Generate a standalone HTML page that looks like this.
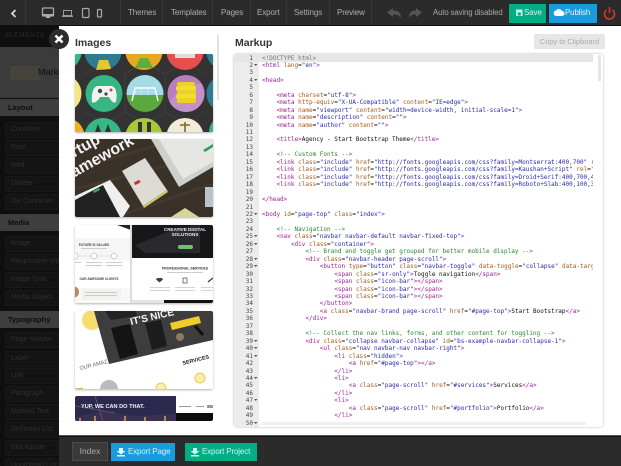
<!DOCTYPE html>
<html lang="en"><head><meta charset="utf-8"><title>Markup export</title>
<style>
*{box-sizing:border-box}
html,body{margin:0;padding:0;width:621px;height:466px;overflow:hidden;background:#111}
body{font-family:"Liberation Sans",sans-serif;position:relative}
.abs,.m,.it,.h{position:absolute}
#top{position:absolute;left:0;top:0;width:621px;height:26px;background:#2b2b2b;border-bottom:1px solid #111}
.sep{position:absolute;top:0;width:1px;height:25px;background:#383838}
.m{top:7px;font-size:8px;line-height:12px;color:#aeaeae;white-space:nowrap;letter-spacing:-.1px}
#side{position:absolute;left:0;top:26px;width:59px;height:440px;background:#0f0f0f;overflow:hidden}
.it{left:5px;width:60px;height:16px;background:#141414;border:1px solid #181818;color:#2e2e2e;font-size:7px;line-height:14px;padding-left:5px;white-space:nowrap}
.h{left:0;width:60px;height:17px;background:#3e3e3e;color:#0e0e0e;font-weight:bold;font-size:7.5px;line-height:17px;padding-left:8px}
#modal{position:absolute;left:59px;top:26px;width:562px;height:410px;background:#fff;border-bottom:1px solid #555}
#bot{position:absolute;left:59px;top:436px;width:562px;height:30px;background:#2b2b2b;border-top:1px solid #111}
.btn{position:absolute;color:#d6f0f4;font-size:8px;text-align:left;white-space:nowrap;letter-spacing:-.15px}
.ttl{position:absolute;font-size:10.5px;font-weight:bold;color:#333}
.img{position:absolute;left:75px;width:138px;overflow:hidden;border-radius:2px;box-shadow:0 1px 2px rgba(0,0,0,.3);display:block}
#ed{position:absolute;left:234px;top:54px;width:369px;height:373px;border-radius:3px;box-shadow:0 0 2px rgba(0,0,0,.3);background:#fff;overflow:hidden}
#gut{position:absolute;left:0;top:0;width:25px;height:373px;background:#ececec}
#act{position:absolute;left:0;top:0;width:359px;height:8px;background:#e6e6e6}
#nums,#code{position:absolute;top:.5px;font-family:"DejaVu Sans Mono","Liberation Mono",monospace;font-size:6px;line-height:7.45px;white-space:pre}
#nums{left:0;width:19px;text-align:right;color:#444}
#code{left:28px;width:331px;height:363px;overflow:hidden;color:#111}
.t{color:#a0209a}.a{color:#a8581a}.s{color:#2a2ab0}.c{color:#2d862d}.d{color:#777}
</style></head><body>
<div id="side">
<div class="abs" style="left:5px;top:6px;font-size:6.5px;color:#2c2c2c;letter-spacing:.6px">ELEMENTS</div>
<div class="abs" style="left:0;top:21px;width:60px;height:51px;background:#3b3b3b"></div>
<div class="abs" style="left:10px;top:40px;width:30px;height:14px;background:#46433c"></div>
<div class="abs" style="left:38px;top:41px;font-size:9px;color:#111">Markup</div>
<div class="h" style="top:73px">Layout</div>
<div class="it" style="top:96px">Container</div>
<div class="it" style="top:114px">Row</div>
<div class="it" style="top:132px">Well</div>
<div class="it" style="top:150px">Divider</div>
<div class="it" style="top:168px">Div Container</div>
<div class="h" style="top:188px">Media</div>
<div class="it" style="top:210px">Image</div>
<div class="it" style="top:228px">Responsive Video</div>
<div class="it" style="top:246px">Image Grid</div>
<div class="it" style="top:264px">Media Object</div>
<div class="h" style="top:285px">Typography</div>
<div class="it" style="top:306px">Page Header</div>
<div class="it" style="top:325px">Label</div>
<div class="it" style="top:342px">Link</div>
<div class="it" style="top:360px">Paragraph</div>
<div class="it" style="top:378px">Marked Text</div>
<div class="it" style="top:396px">Definition List</div>
<div class="it" style="top:414px">Blockquote</div>
<div class="it" style="top:432px">Unordered List</div>
</div>

<div id="top">
<div class="sep" style="left:25px"></div><div class="sep" style="left:120px"></div><div class="sep" style="left:162px"></div><div class="sep" style="left:212px"></div><div class="sep" style="left:250px"></div><div class="sep" style="left:286px"></div><div class="sep" style="left:329px"></div><div class="sep" style="left:371px"></div>
<svg class="abs" style="left:0;top:0" width="621" height="26" viewBox="0 0 621 26">
<path d="M15.5 10 L12 13.5 L15.5 17" fill="none" stroke="#ddd" stroke-width="1.7"/>
<rect x="42.5" y="8" width="11" height="8" rx="1" fill="none" stroke="#aaa" stroke-width="1.3"/><rect x="42" y="14" width="12" height="2" fill="#aaa"/><rect x="46" y="16" width="4" height="2" fill="#aaa"/>
<rect x="63.5" y="10.500" width="8" height="5" fill="none" stroke="#999" stroke-width="1"/><rect x="62" y="15.500" width="11" height="1.500" fill="#999"/>
<rect x="82.500" y="8.500" width="6.500" height="9" rx="1" fill="none" stroke="#aaa" stroke-width="1.200"/>
<rect x="97.500" y="9.500" width="4" height="7.500" rx="1" fill="none" stroke="#aaa" stroke-width="1.200"/>
<path d="M387 12.500 L393 8 V10.500 C398 10.500 401 13 401 18 C399.500 15 397 14.500 393 14.500 V17Z" fill="#555"/>
<path d="M422 12.500 L416 8 V10.500 C411 10.500 409 13 409 18 C410.500 15 412 14.500 416 14.500 V17Z" fill="#555"/>
<path d="M606.500 10 A5 5 0 1 0 612.500 10" fill="none" stroke="#e4382c" stroke-width="1.400"/><path d="M609.500 7 V13" stroke="#e4382c" stroke-width="1.400"/>
</svg>
<div class="m" style="left:128px">Themes</div><div class="m" style="left:171px">Templates</div><div class="m" style="left:221px">Pages</div><div class="m" style="left:257px">Export</div><div class="m" style="left:294px">Settings</div><div class="m" style="left:337px">Preview</div>
<div class="m" style="left:433px;font-size:7.8px;color:#a8a8a8;letter-spacing:-.12px">Auto saving disabled</div>
<div class="btn" style="left:509px;top:4px;width:37px;height:19px;background:#03ad85;line-height:18px;padding-left:15px">Save</div>
<div class="btn" style="left:549px;top:4px;width:48px;height:19px;background:#1a9bdb;line-height:18px;padding-left:16px;color:#e6f5fb">Publish</div>
<svg class="abs" style="left:0;top:0" width="621" height="26" viewBox="0 0 621 26">
<rect x="516" y="9.500" width="6.500" height="6.500" fill="#c8efe4"/><rect x="517.800" y="12.500" width="3" height="3" fill="#00ad85"/>
<path d="M556 16 h6 a2.500 2.500 0 0 0 0 -5 a3.500 3.500 0 0 0 -6 -.5 a2.800 2.800 0 0 0 0 5.500z" fill="#fff"/>
</svg>
</div>

<div id="modal"></div>
<div class="abs" style="left:217px;top:35px;width:2px;height:65px;background:#e2e2e2"></div>
<div class="ttl" style="left:75px;top:37px">Images</div>
<div class="ttl" style="left:235px;top:37px">Markup</div>
<div class="abs" style="left:534px;top:34px;width:71px;height:15px;background:#e6e6e6;border-radius:1px;color:#a9a9a9;font-size:7.4px;line-height:15px;text-align:center;white-space:nowrap">Copy to Clipboard</div>

<svg class="abs" style="left:49px;top:29px" width="20" height="20" viewBox="0 0 20 20"><circle cx="10" cy="10" r="10" fill="#2c2c2c"/><path d="M6.500 6.500 L13.500 13.500 M13.500 6.500 L6.500 13.500" stroke="#fff" stroke-width="2.600"/></svg>

<svg class="img" style="top:54px;height:78px" viewBox="0 0 138 78">
<rect width="138" height="78" fill="#333"/>
<g stroke="#3e3e3e" fill="none"><path d="M10 20 L30 8 M50 20 L70 8 L90 20 L110 8 L130 20 M50 20 V58 M90 20 V58 M10 58 L30 70 L50 58 L70 70 L90 58 L110 70 L130 58"/></g>
<circle cx="28" cy="-2.500" r="18.500" fill="#2f7c92"/><path d="M21 16 L24 6 L33 6 L36 15 Z" fill="#e2c72e"/>
<circle cx="69" cy="-2.500" r="18.500" fill="#e5a91f"/><path d="M60 14 L65 4 L73 4 L78 14 Z" fill="#62ac3f"/>
<circle cx="110" cy="-2.500" r="18.500" fill="#e94e4e"/><rect x="100" y="0" width="20" height="4" fill="#ddd"/>
<circle cx="-12" cy="-2.500" r="18.500" fill="#36b785"/><circle cx="150" cy="-2.500" r="18.500" fill="#2f7c92"/>
<circle cx="-12" cy="39.500" r="18.500" fill="#f5e77f"/><circle cx="150" cy="39.500" r="18.500" fill="#2f7c92"/>
<circle cx="29" cy="39.500" r="18.500" fill="#35b683"/>
<path d="M17 48 C16 38 19 32 23 32 L36 32 C40 32 43 38 41 48 C39 50 36 47 34 43 L25 43 C23 47 19 50 17 48Z" fill="#f2f2f2"/><circle cx="25" cy="37" r="2.200" fill="#444"/><circle cx="31" cy="40" r="1.600" fill="#444"/><circle cx="36" cy="36" r="1.500" fill="#c44"/>
<clipPath id="g1"><circle cx="70" cy="39.500" r="18.500"/></clipPath>
<g clip-path="url(#g1)"><rect x="50" y="20" width="40" height="21" fill="#a5dbe5"/><rect x="50" y="41" width="40" height="20" fill="#5aa93f"/><path d="M57 47 L60 34 L80 34 L83 47" fill="none" stroke="#fff" stroke-width="1.400"/><path d="M60 38 H80 M60 34 V41 M66 34 V41 M73 34 V41" stroke="#d8eef2" stroke-width=".6"/></g>
<clipPath id="g2"><circle cx="111" cy="39.500" r="18.500"/></clipPath>
<g clip-path="url(#g2)"><rect x="90" y="20" width="42" height="40" fill="#b77fc0"/><path d="M92 50 L102 40 L122 30 L130 28 V60 H92Z" fill="#c390ca"/><rect x="102" y="28" width="18" height="5" rx="2" fill="#eed21f"/><rect x="101" y="32" width="20" height="5" rx="2" fill="#f2dc38"/><rect x="102" y="36" width="19" height="5" rx="2" fill="#eed21f"/><rect x="101" y="40" width="20" height="5" rx="2" fill="#f2dc38"/><rect x="102" y="44" width="19" height="5" rx="2" fill="#eed21f"/></g>
<circle cx="28" cy="82.500" r="18.500" fill="#36b785"/><path d="M20 78 L23 70 L26 78Z M30 78 L33 70 L36 78Z" fill="#333"/>
<circle cx="69" cy="82.500" r="18.500" fill="#a9c832"/><rect x="63" y="68" width="4" height="10" fill="#333"/><rect x="72" y="68" width="4" height="10" fill="#333"/>
<circle cx="110" cy="82.500" r="18.500" fill="#f2ecd7"/><path d="M110 68 V78 M105 71 H115" stroke="#7a6a20" stroke-width="1.600"/>
<circle cx="-9" cy="82.500" r="18.500" fill="#efb21f"/><circle cx="150" cy="78" r="16" fill="#36b785"/>
</svg>

<svg class="img" style="top:139px;height:78px" viewBox="0 0 138 78">
<rect width="138" height="78" fill="#3a3129"/>
<path d="M0 30 L138 -10 M0 50 L138 15 M40 78 L138 45" stroke="#42382e" stroke-width="3"/>
<text x="-1" y="18" transform="rotate(-29 0 18)" font-family="Liberation Sans" font-size="16" font-weight="bold" fill="#f4f4f4">rtup</text>
<text x="-1" y="38" transform="rotate(-29 0 38)" font-family="Liberation Sans" font-size="16" font-weight="bold" fill="#f4f4f4">amework</text>
<path d="M76 0 L104 48 L138 28 V0Z" fill="#cfcfcb"/><path d="M84 0 L108 40 L138 23 V0Z" fill="#e6e6e4"/><path d="M128 11 L138 5 V8 L130 13Z" fill="#2aa05a"/>
<path d="M70 19 L47 32 L68 67 L92 51Z" fill="#dcdbd5"/><path d="M68 67 L92 51 L93 53 L69 69Z" fill="#cfc76a"/><rect x="59" y="42" width="6" height="3" fill="#c9362c" transform="rotate(-28 62 43)"/>
<path d="M0 57 L35 41 L55 67 L48 78 L0 78Z" fill="#efefef"/><path d="M0 61 L28 46 L45 78 L0 78Z" fill="#222"/><path d="M18 52 L24 49 L25 51 L19 54Z" fill="#3aa76a"/>
<path d="M96 78 L110 69 L124 78Z" fill="#d9d3a0"/><rect x="130" y="48" width="8" height="20" fill="#b9c4c8"/>
</svg>

<svg class="img" style="top:225px;height:78px" viewBox="0 0 138 78">
<rect width="138" height="78" fill="#fff"/>
<rect y="13" width="55" height="22" fill="#f6f6f6"/><rect y="63" width="55" height="15" fill="#f8f8f8"/>
<path d="M42 0 L56 5 V0Z" fill="#222"/>
<rect x="55" y="0" width="2" height="78" fill="#ddd"/>
<rect x="57" y="0" width="81" height="33" fill="#17171a"/>
<path d="M60 20 L100 4 L125 0 L125 28 H70Z" fill="#2a2a2c"/>
<text x="110" y="6" text-anchor="middle" font-family="Liberation Sans" font-size="4.600" font-weight="bold" fill="#eee">CREATIVE DIGITAL</text>
<text x="110" y="11" text-anchor="middle" font-family="Liberation Sans" font-size="4.600" font-weight="bold" fill="#eee">SOLUTIONS</text>
<rect x="103" y="20" width="15" height="4" rx="2" fill="#6fc36b"/>
<text x="110" y="44.500" text-anchor="middle" font-family="Liberation Sans" font-size="3.500" font-weight="bold" fill="#333">PROFESSIONAL SERVICES</text>
<rect x="92" y="47" width="36" height="1" fill="#ccc"/>
<path d="M82 53 h5 l1 1.500 l-3.500 3 l-3.500 -3z" fill="#444"/><rect x="108" y="53" width="4" height="5" fill="none" stroke="#444" stroke-width=".7"/><path d="M133 57 L138 53" stroke="#333" stroke-width="1.200"/>
<path d="M75 62 h20 v1 h-20z M75 65 h20 v1 h-20z M100 62 h20 v1 h-20z M100 65 h20 v1 h-20z M126 62 h12 v1 h-12z M126 65 h12 v1 h-12z" fill="#d4d4d4"/>
<rect x="57" y="75" width="32" height="3" fill="#e4e4e4"/><rect x="89" y="75" width="49" height="3" fill="#111"/>
<text x="19" y="21" text-anchor="middle" font-family="Liberation Sans" font-size="3.200" font-weight="bold" fill="#444">FUTURE IS VALUED</text>
<rect x="6" y="23" width="26" height="1" fill="#ccc"/>
<path d="M2 31 H42" stroke="#ccc" stroke-width=".5"/><circle cx="19" cy="31" r="3" fill="#fff" stroke="#999" stroke-width=".5"/><circle cx="39" cy="31" r="3" fill="#fff" stroke="#999" stroke-width=".5"/><circle cx="0" cy="31" r="3" fill="#fff" stroke="#999" stroke-width=".5"/>
<path d="M11 37 h16 v1 h-16z M31 37 h16 v1 h-16z M0 37 h6 v1 h-6z M11 40 h16 v1 h-16z M31 40 h16 v1 h-16z" fill="#ccc"/>
<text x="24" y="55" text-anchor="middle" font-family="Liberation Sans" font-size="3.200" font-weight="bold" fill="#444">OUR AWESOME CLIENTS</text>
<rect x="7" y="64" width="39" height="11" fill="#f0f3ee"/><path d="M10 67 h32 v1 h-32z M10 70 h32 v1 h-32z" fill="#ccc"/>
<circle cx="-2" cy="67" r="6" fill="#b9895f"/>
</svg>

<svg class="img" style="top:311px;height:78px" viewBox="0 0 138 78">
<rect width="138" height="78" fill="#fff"/>
<circle cx="17" cy="9" r="10" fill="#f7dc6f"/>
<path d="M19 0 L138 0 L138 29 L34 53Z" fill="#3d3d3d"/>
<text x="56" y="14" transform="rotate(-13 56 14)" font-family="Liberation Sans" font-size="10" font-weight="bold" fill="#f5f5f5">IT'S NICE</text>
<path d="M95 12 L124 5 L126 12 L97 19Z" fill="#f3cc2a"/>
<path d="M36 17 L55 13 L63 43 L45 48Z" fill="#141414"/><path d="M70 12 L86 9 L92 35 L77 39Z" fill="#1c1c1c"/><circle cx="105" cy="26" r="4" fill="#8a7a60"/><path d="M120 15 L128 24" stroke="#111" stroke-width="3"/><path d="M30 0 L60 -1 L62 5 L36 9Z" fill="#222"/>
<text x="108" y="54" transform="rotate(-14 108 54)" font-family="Liberation Sans" font-size="5.400" font-weight="bold" fill="#222">SERVICES</text>
<text x="5" y="59" transform="rotate(-14 5 59)" font-family="Liberation Sans" font-size="5.500" fill="#666">OUR AMAZ</text>
<circle cx="125" cy="67" r="5" fill="#f9efb0" stroke="#e8cf4a"/><circle cx="86" cy="77" r="5" fill="#f9efb0" stroke="#e8cf4a"/>
<circle cx="34" cy="78" r="9" fill="#bbb"/><path d="M0 78 H8 V77 H0Z" fill="#d9b070"/>
</svg>

<svg class="img" style="top:396px;height:25px;box-shadow:none" viewBox="0 0 138 25">
<rect width="138" height="25" fill="#fff"/><rect width="101" height="25" fill="#2b2a4e"/>
<rect x="101" y="17" width="37" height="8" fill="#0c0c0c"/>
<path d="M0 25 V21 L30 15 L60 20 L101 18 V25Z" fill="#3a3050"/><path d="M0 10 L40 17 M20 0 L28 25" stroke="#556" stroke-width="1"/><path d="M5 25 V22 M20 25 V20 M50 25 V20 M70 25 V21 M90 25 V20" stroke="#d9a25a" stroke-width="1.500"/>
<text x="6" y="12" font-family="Liberation Sans" font-size="5.600" font-weight="bold" fill="#f2f2f2">YUP, WE CAN DO THAT.</text>
<path d="M104 10 h12 v1 h-12z M121 10 h8 v1 h-8z M132 9 h6 v3 h-6z" fill="#999"/>
</svg>

<div id="ed">
<div id="gut"></div><div id="act"></div>
<div class="abs" style="left:27px;top:368px;width:325px;height:3px;background:#f0f0f0"></div>
<div class="abs" style="left:364px;top:1px;width:3px;height:26px;background:#e6e6e6"></div>
<div id="nums">1
2
3
4
5
6
7
8
9
10
11
12
13
14
15
16
17
18
19
20
21
22
23
24
25
26
27
28
29
30
31
32
33
34
35
36
37
38
39
40
41
42
43
44
45
46
47
48
49
50</div>
<svg class="abs" style="left:20px;top:0" width="5" height="373" viewBox="0 0 5 373"><path fill="#555" d="M0 10h3.500l-1.750 2z M0 25h3.500l-1.750 2z M0 159h3.500l-1.750 2z M0 181h3.500l-1.750 2z M0 189h3.500l-1.750 2z M0 204h3.500l-1.750 2z M0 211h3.500l-1.750 2z M0 286h3.500l-1.750 2z M0 293h3.500l-1.750 2z M0 301h3.500l-1.750 2z M0 323h3.500l-1.750 2z M0 345h3.500l-1.750 2z M0 368h3.500l-1.750 2z"/></svg>
<div id="code"><span class="d">&lt;!DOCTYPE html&gt;</span>
<span class="t">&lt;html</span> <span class="a">lang</span>=<span class="s">"en"</span><span class="t">&gt;</span>

<span class="t">&lt;head&gt;</span>

    <span class="t">&lt;meta</span> <span class="a">charset</span>=<span class="s">"utf-8"</span><span class="t">&gt;</span>
    <span class="t">&lt;meta</span> <span class="a">http-equiv</span>=<span class="s">"X-UA-Compatible"</span> <span class="a">content</span>=<span class="s">"IE=edge"</span><span class="t">&gt;</span>
    <span class="t">&lt;meta</span> <span class="a">name</span>=<span class="s">"viewport"</span> <span class="a">content</span>=<span class="s">"width=device-width, initial-scale=1"</span><span class="t">&gt;</span>
    <span class="t">&lt;meta</span> <span class="a">name</span>=<span class="s">"description"</span> <span class="a">content</span>=<span class="s">""</span><span class="t">&gt;</span>
    <span class="t">&lt;meta</span> <span class="a">name</span>=<span class="s">"author"</span> <span class="a">content</span>=<span class="s">""</span><span class="t">&gt;</span>

    <span class="t">&lt;title&gt;</span>Agency - Start Bootstrap Theme<span class="t">&lt;/title&gt;</span>

    <span class="c">&lt;!-- Custom Fonts --&gt;</span>
    <span class="t">&lt;link</span> <span class="a">class</span>=<span class="s">"include"</span> <span class="a">href</span>=<span class="s">"http://fonts.googleapis.com/css?family=Montserrat:400,700"</span> <span class="a">rel</span>=<span class="s">"stylesheet"</span>
    <span class="t">&lt;link</span> <span class="a">class</span>=<span class="s">"include"</span> <span class="a">href</span>=<span class="s">"http://fonts.googleapis.com/css?family=Kaushan+Script"</span> <span class="a">rel</span>=<span class="s">"stylesheet"</span>
    <span class="t">&lt;link</span> <span class="a">class</span>=<span class="s">"include"</span> <span class="a">href</span>=<span class="s">"http://fonts.googleapis.com/css?family=Droid+Serif:400,700,400italic"</span>
    <span class="t">&lt;link</span> <span class="a">class</span>=<span class="s">"include"</span> <span class="a">href</span>=<span class="s">"http://fonts.googleapis.com/css?family=Roboto+Slab:400,100,300,700"</span>

<span class="t">&lt;/head&gt;</span>

<span class="t">&lt;body</span> <span class="a">id</span>=<span class="s">"page-top"</span> <span class="a">class</span>=<span class="s">"index"</span><span class="t">&gt;</span>

    <span class="c">&lt;!-- Navigation --&gt;</span>
    <span class="t">&lt;nav</span> <span class="a">class</span>=<span class="s">"navbar navbar-default navbar-fixed-top"</span><span class="t">&gt;</span>
        <span class="t">&lt;div</span> <span class="a">class</span>=<span class="s">"container"</span><span class="t">&gt;</span>
            <span class="c">&lt;!-- Brand and toggle get grouped for better mobile display --&gt;</span>
            <span class="t">&lt;div</span> <span class="a">class</span>=<span class="s">"navbar-header page-scroll"</span><span class="t">&gt;</span>
                <span class="t">&lt;button</span> <span class="a">type</span>=<span class="s">"button"</span> <span class="a">class</span>=<span class="s">"navbar-toggle"</span> <span class="a">data-toggle</span>=<span class="s">"collapse"</span> <span class="a">data-target</span>=<span class="s">"#bs-example"</span>
                    <span class="t">&lt;span</span> <span class="a">class</span>=<span class="s">"sr-only"</span><span class="t">&gt;</span>Toggle navigation<span class="t">&lt;/span&gt;</span>
                    <span class="t">&lt;span</span> <span class="a">class</span>=<span class="s">"icon-bar"</span><span class="t">&gt;&lt;/span&gt;</span>
                    <span class="t">&lt;span</span> <span class="a">class</span>=<span class="s">"icon-bar"</span><span class="t">&gt;&lt;/span&gt;</span>
                    <span class="t">&lt;span</span> <span class="a">class</span>=<span class="s">"icon-bar"</span><span class="t">&gt;&lt;/span&gt;</span>
                <span class="t">&lt;/button&gt;</span>
                <span class="t">&lt;a</span> <span class="a">class</span>=<span class="s">"navbar-brand page-scroll"</span> <span class="a">href</span>=<span class="s">"#page-top"</span><span class="t">&gt;</span>Start Bootstrap<span class="t">&lt;/a&gt;</span>
            <span class="t">&lt;/div&gt;</span>

            <span class="c">&lt;!-- Collect the nav links, forms, and other content for toggling --&gt;</span>
            <span class="t">&lt;div</span> <span class="a">class</span>=<span class="s">"collapse navbar-collapse"</span> <span class="a">id</span>=<span class="s">"bs-example-navbar-collapse-1"</span><span class="t">&gt;</span>
                <span class="t">&lt;ul</span> <span class="a">class</span>=<span class="s">"nav navbar-nav navbar-right"</span><span class="t">&gt;</span>
                    <span class="t">&lt;li</span> <span class="a">class</span>=<span class="s">"hidden"</span><span class="t">&gt;</span>
                        <span class="t">&lt;a</span> <span class="a">href</span>=<span class="s">"#page-top"</span><span class="t">&gt;&lt;/a&gt;</span>
                    <span class="t">&lt;/li&gt;</span>
                    <span class="t">&lt;li&gt;</span>
                        <span class="t">&lt;a</span> <span class="a">class</span>=<span class="s">"page-scroll"</span> <span class="a">href</span>=<span class="s">"#services"</span><span class="t">&gt;</span>Services<span class="t">&lt;/a&gt;</span>
                    <span class="t">&lt;/li&gt;</span>
                    <span class="t">&lt;li&gt;</span>
                        <span class="t">&lt;a</span> <span class="a">class</span>=<span class="s">"page-scroll"</span> <span class="a">href</span>=<span class="s">"#portfolio"</span><span class="t">&gt;</span>Portfolio<span class="t">&lt;/a&gt;</span>
                    <span class="t">&lt;/li&gt;</span></div>
</div>

<div id="bot"></div>
<div class="btn" style="left:72px;top:442px;width:36px;height:19px;background:#3a3a3a;border:1px solid #4a4a4a;line-height:17px;color:#aaa;font-size:8.5px;text-align:center;letter-spacing:0">Index</div>
<div class="btn" style="left:111px;top:443px;width:64px;height:18px;background:#1a9bdb;line-height:18px;padding-left:17px">Export Page</div>
<div class="btn" style="left:185px;top:443px;width:72px;height:18px;background:#03ad85;line-height:18px;padding-left:17px">Export Project</div>
<svg class="abs" style="left:0;top:0;pointer-events:none" width="621" height="466" viewBox="0 0 621 466"><path d="M119 448 h4 v3 h2.500 l-4.500 3.500 l-4.500 -3.500 h2.500z M117 455 h8 v1.500 h-8z" fill="#e6f5fb"/><path d="M193 448 h4 v3 h2.500 l-4.500 3.500 l-4.500 -3.500 h2.500z M191 455 h8 v1.500 h-8z" fill="#d6f4ec"/></svg>
</body></html>
